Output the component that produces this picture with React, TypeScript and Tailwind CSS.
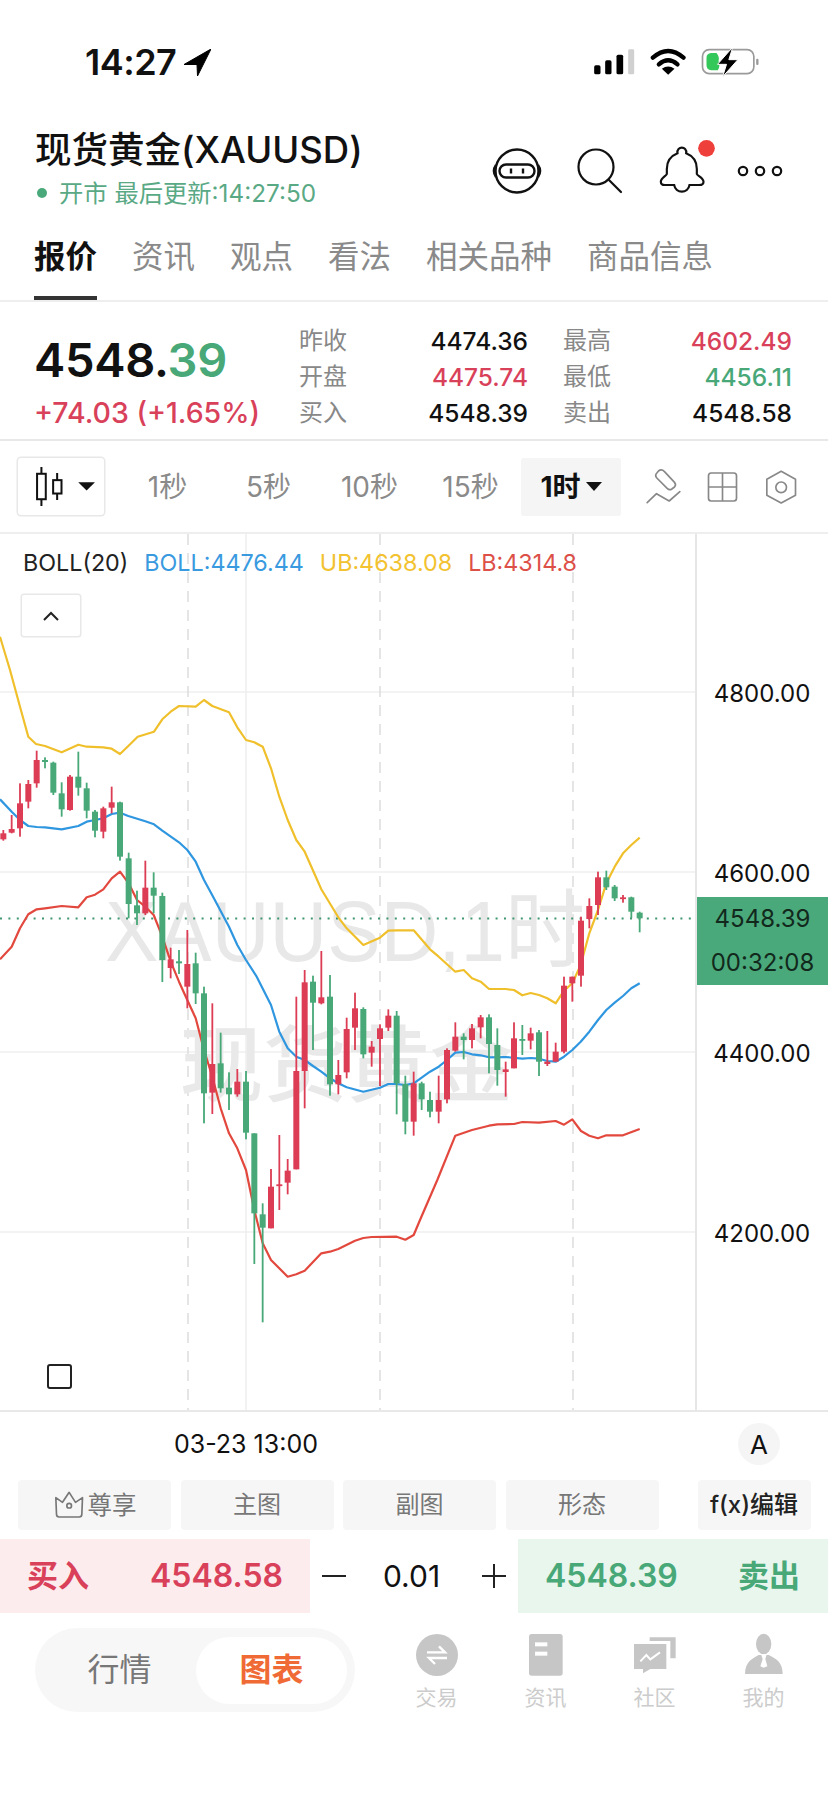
import React from "react";

const RED = "#dc3c54";
const GREEN = "#48a878";

type C = [number, number, number, number, number, "r" | "g"];

const z3: C[] = [
  [10, 630, 640, 658, 662, "r"], [35, 585, 627, 638, 640, "r"], [60, 490, 550, 625, 650, "r"], [85, 480, 492, 545, 565, "r"],
  [110, 392, 420, 490, 503, "r"], [135, 412, 420, 426, 445, "g"], [160, 425, 428, 518, 525, "g"], [185, 487, 520, 568, 590, "g"],
  [210, 465, 470, 570, 572, "r"], [235, 395, 470, 503, 527, "g"], [260, 488, 505, 572, 595, "g"], [285, 570, 575, 632, 652, "g"],
  [310, 560, 565, 635, 655, "r"], [335, 500, 547, 563, 580, "r"], [360, 545, 547, 710, 722, "g"], [386, 698, 715, 852, 895, "g"],
  [411, 812, 856, 880, 915, "g"], [436, 722, 803, 880, 885, "r"], [461, 757, 803, 827, 880, "g"], [487, 818, 828, 1020, 1086, "g"],
  [512, 983, 1018, 1044, 1075, "r"], [537, 990, 1024, 1030, 1062, "g"],
];

const z4: C[] = [
  [562, -90, 12, 80, 145, "r"], [587, -22, 10, 100, 132, "g"], [612, 80, 100, 400, 490, "g"], [637, 130, 312, 398, 462, "r"],
  [662, 218, 310, 385, 398, "g"], [687, 337, 383, 403, 450, "g"], [712, 327, 365, 403, 410, "r"], [738, 333, 365, 518, 538, "g"],
  [763, 520, 520, 760, 912, "g"], [788, 730, 763, 803, 1087, "g"], [813, 627, 680, 805, 805, "r"], [838, 525, 673, 678, 750, "r"],
  [863, 597, 632, 668, 703, "r"], [889, 110, 333, 628, 628, "r"], [914, 30, 67, 333, 445, "r"], [939, 47, 65, 128, 270, "g"],
  [964, -27, 112, 130, 133, "r"], [990, 45, 110, 373, 407, "g"], [1015, 300, 345, 373, 403, "r"], [1040, 173, 207, 337, 355, "r"],
  [1065, 98, 145, 203, 270, "r"], [1090, 142, 147, 283, 295, "g"], [1115, 243, 260, 278, 320, "r"], [1140, 193, 205, 237, 378, "r"],
  [1165, 148, 167, 203, 213, "r"], [1190, 153, 167, 370, 463, "g"], [1216, 347, 372, 485, 523, "g"], [1241, 335, 370, 485, 527, "r"],
];

const z5: C[] = [
  [65, 785, 790, 838, 870, "g"], [90, 815, 840, 875, 892, "g"], [116, 767, 840, 875, 910, "r"], [141, 685, 690, 838, 850, "r"],
  [166, 607, 650, 692, 695, "r"], [191, 640, 650, 660, 718, "g"], [216, 612, 625, 660, 685, "r"], [242, 585, 592, 622, 655, "r"],
  [267, 583, 592, 672, 760, "g"], [292, 625, 675, 750, 797, "g"], [317, 725, 748, 756, 830, "r"], [342, 607, 655, 745, 745, "r"],
  [367, 615, 657, 661, 705, "g"], [392, 623, 640, 662, 688, "r"], [417, 630, 637, 725, 768, "g"], [442, 633, 725, 732, 738, "r"],
  [467, 668, 695, 725, 725, "r"], [492, 470, 497, 695, 700, "r"], [517, 470, 470, 490, 545, "r"], [543, 290, 302, 467, 500, "r"],
  [568, 235, 258, 297, 325, "r"], [594, 155, 172, 255, 285, "r"], [619, 152, 172, 202, 210, "g"], [644, 195, 200, 235, 243, "g"],
  [669, 225, 232, 237, 248, "r"], [694, 230, 232, 275, 295, "g"], [719, 275, 278, 295, 337, "g"],
];

type P = [number, number];
const a3 = (p: P): P => [p[0] / 3, 620 + p[1] / 3];
const a4 = (p: P): P => [p[0] / 3, 960 + p[1] / 3];
const a5 = (p: P): P => [400 + p[0] / 3, 820 + p[1] / 3];
const pts = (l: P[]) => l.map((p) => `${p[0].toFixed(1)},${p[1].toFixed(1)}`).join(" ");

const candles = [
  ...z3.map((c) => ({ x: c[0] / 3, o: 620, c })),
  ...z4.map((c) => ({ x: c[0] / 3, o: 960, c })),
  ...z5.map((c) => ({ x: 400 + c[0] / 3, o: 820, c })),
];

const yellow: P[] = [
  ...([[0, 50], [30, 150], [60, 260], [85, 350], [108, 372], [135, 378], [185, 397], [235, 374], [260, 380], [310, 382], [335, 386], [360, 402], [385, 378], [413, 350], [462, 335], [487, 298], [512, 275], [537, 258], [587, 260], [612, 240], [637, 258], [687, 277], [712, 322], [738, 360], [763, 367], [788, 380], [813, 445], [838, 530], [863, 600], [889, 660], [914, 695], [964, 808], [1015, 892], [1040, 925], [1090, 975], [1140, 953], [1165, 932], [1190, 931]] as P[]).map(a3),
  ...([[41, 331], [90, 388], [116, 410], [166, 455], [191, 450], [216, 475], [242, 485], [267, 507], [317, 507], [342, 510], [367, 526], [392, 519], [417, 525], [442, 535], [467, 550], [492, 512], [517, 490], [542, 435], [568, 340], [594, 270], [619, 190], [644, 140], [669, 100], [694, 75], [719, 53]] as P[]).map(a5),
];

const blue: P[] = [
  ...([[0, 538], [35, 575], [60, 600], [85, 618], [110, 621], [135, 622], [185, 628], [235, 618], [260, 605], [285, 600], [310, 595], [335, 582], [360, 578], [385, 588], [436, 604], [462, 613], [487, 632], [537, 667], [562, 690], [587, 725], [612, 780], [638, 828], [687, 920], [712, 975], [738, 1020]] as P[]).map(a3),
  ...([[770, 50], [813, 135], [838, 215], [863, 265], [889, 290], [914, 300], [939, 318], [964, 335], [990, 355], [1015, 370], [1040, 382], [1090, 395], [1140, 383], [1165, 372], [1190, 372], [1216, 375]] as P[]).map(a4),
  ...([[41, 790], [90, 755], [116, 740], [141, 720], [166, 698], [191, 696], [216, 703], [242, 706], [267, 712], [317, 711], [367, 716], [392, 714], [417, 716], [442, 723], [467, 725], [492, 710], [517, 690], [542, 665], [568, 635], [594, 600], [619, 570], [644, 548], [669, 528], [694, 505], [719, 490]] as P[]).map(a5),
];

const redLine: P[] = [
  ...([[0, 1018], [35, 980], [60, 925], [85, 883], [110, 868], [135, 865], [185, 858], [235, 862], [260, 832], [285, 824], [310, 808], [335, 775], [360, 755], [386, 790], [411, 840], [436, 860], [461, 885], [487, 950]] as P[]).map(a3),
  ...([[512, 5], [537, 65], [562, 120], [587, 175], [612, 270], [637, 350], [662, 445], [687, 520], [712, 565], [738, 630], [763, 750], [788, 850], [813, 900], [863, 950], [889, 943], [914, 932], [964, 880], [990, 875], [1015, 867], [1065, 842], [1090, 834], [1115, 831], [1190, 830], [1216, 839], [1241, 825], [1260, 780]] as P[]).map(a4),
  ...([[112, 1080], [166, 947], [216, 930], [267, 917], [292, 913], [342, 912], [367, 906], [417, 908], [467, 903], [492, 914], [517, 898], [543, 933], [568, 947], [594, 955], [619, 946], [669, 946], [719, 927]] as P[]).map(a5),
];

function ChartDrawing() {
  return (
    <svg className="absolute left-0 top-0" width="828" height="876" viewBox="0 534 828 876">
      {[692, 872, 1052, 1232].map((y) => (
        <line key={y} x1="0" x2="696" y1={y} y2={y} stroke="#efefef" strokeWidth="1.5" />
      ))}
      <line x1="246" x2="246" y1="534" y2="1410" stroke="#eeeeee" strokeWidth="1.5" />
      <line x1="696" x2="696" y1="534" y2="1410" stroke="#e6e6e6" strokeWidth="2" />
      {[188, 380, 573].map((x) => (
        <line key={x} x1={x} x2={x} y1="534" y2="1410" stroke="#dddddd" strokeWidth="1.5" strokeDasharray="11 8" />
      ))}
      <text x="105" y="961" fontSize="86" textLength="480" lengthAdjust="spacingAndGlyphs" fill="#e8e8e8" fontFamily="'Liberation Sans','Noto Sans CJK SC',sans-serif">XAUUSD,1时</text>
      <text x="180" y="1095" fontSize="83" textLength="333" lengthAdjust="spacingAndGlyphs" fill="#e9e9e9" fontWeight="500" fontFamily="'Noto Sans CJK SC',sans-serif">现货黄金</text>
      <line x1="0" x2="696" y1="918.5" y2="918.5" stroke="#3f9670" strokeWidth="2" strokeDasharray="2 6.400" />
      <polyline points={pts(yellow)} fill="none" stroke="#f0c02c" strokeWidth="2.2" strokeLinejoin="round" />
      <polyline points={pts(blue)} fill="none" stroke="#2f96e0" strokeWidth="2.2" strokeLinejoin="round" />
      <polyline points={pts(redLine)} fill="none" stroke="#e2483d" strokeWidth="2.2" strokeLinejoin="round" />
      {candles.map(({ x, o, c }, i) => {
        const col = c[5] === "r" ? RED : GREEN;
        return (
          <g key={i} fill={col}>
            <rect x={x - 0.9} y={o + c[1] / 3} width="1.8" height={(c[4] - c[1]) / 3} />
            <rect x={x - 3} y={o + c[2] / 3} width="6" height={Math.max((c[3] - c[2]) / 3, 1.8)} />
          </g>
        );
      })}
    </svg>
  );
}

function StatusIcons() {
  return (
    <svg width="167" height="30" viewBox="100 50 500 90">
      <rect x="103" y="105" width="19" height="27" rx="5" fill="#000" />
      <rect x="136" y="90" width="19" height="42" rx="5" fill="#000" />
      <rect x="170" y="73" width="20" height="59" rx="5" fill="#000" />
      <rect x="205" y="57" width="18" height="75" rx="4" fill="#d0d0d0" />
      <path d="M279 82 Q325 42 371 82" fill="none" stroke="#000" strokeWidth="13" strokeLinecap="round" />
      <path d="M297 102 Q325 78 353 102" fill="none" stroke="#000" strokeWidth="13" strokeLinecap="round" />
      <path d="M325 133 L306 115 Q325 102 344 115 Z" fill="#000" />
      <rect x="428" y="58" width="154" height="72" rx="20" fill="none" stroke="#9a9a9a" strokeWidth="5" />
      <rect x="589" y="85" width="7" height="19" rx="3" fill="#9a9a9a" />
      <path d="M454 68 L470 68 Q480 80 476 92 Q482 106 474 120 L454 120 Q440 118 440 104 L440 82 Q440 70 454 68 Z" fill="#34c759" />
      <path d="M519 50 L473 102 L500 102 L488 140 L534 88 L507 88 Z" fill="#000" stroke="#fff" strokeWidth="3" />
    </svg>
  );
}

function Robot() {
  return (
    <svg width="52" height="48" viewBox="0 0 52 48" fill="none" stroke="#111" strokeWidth="2.400">
      <circle cx="26" cy="24" r="21.500" />
      <path d="M5 18 Q0.800 24 5 30 M47 18 Q51.200 24 47 30" />
      <rect x="8.500" y="17.500" width="35" height="13" rx="6.500" />
      <path d="M20 21.500 V26.500 M32 21.500 V26.500" />
    </svg>
  );
}

function Search() {
  return (
    <svg width="46" height="46" viewBox="0 0 46 46" fill="none" stroke="#111" strokeWidth="2.200" strokeLinecap="round">
      <circle cx="19" cy="19" r="17.500" />
      <path d="M32 32 L44 44" />
    </svg>
  );
}

function Bell() {
  return (
    <svg width="57" height="55" viewBox="535 15 170 165" fill="none">
      <path
        d="M590 58 C588 46 596 41 603 41 C610 41 618 46 616 58 C636 66 648 84 648 105 L648 120 C650 126 668 132 668 143 C668 150 662 153 655 153 L626 153 C624 165 614 173 603 173 C592 173 582 165 580 153 L552 153 C545 153 540 150 540 143 C540 132 556 126 558 120 L558 105 C558 84 570 66 590 58 Z"
        stroke="#111"
        strokeWidth="6.500"
      />
      <circle cx="677" cy="43" r="25" fill="#ee3f3a" />
    </svg>
  );
}

function Dots() {
  return (
    <svg width="46" height="12" viewBox="0 0 46 12" fill="none" stroke="#111" strokeWidth="2.200">
      <circle cx="6" cy="6" r="4.200" />
      <circle cx="23" cy="6" r="4.200" />
      <circle cx="40" cy="6" r="4.200" />
    </svg>
  );
}

function CandleIcon() {
  return (
    <svg width="86" height="57" viewBox="55 25 257 170" fill="none">
      <path d="M125 52 V168 M172 70 V150" stroke="#111" strokeWidth="6" />
      <rect x="112" y="72" width="26" height="76" fill="#fff" stroke="#111" strokeWidth="6" />
      <rect x="160" y="91" width="25" height="40" fill="#fff" stroke="#111" strokeWidth="6" />
      <path d="M235 97 H285 L260 122 Z" fill="#111" />
    </svg>
  );
}

function ToolIcons() {
  return (
    <svg width="157" height="40" viewBox="400 50 470 120" fill="none" stroke="#888" strokeWidth="5" strokeLinejoin="round">
      <path d="M446 62 Q455 55 464 64 L494 96 Q500 103 494 110 L486 116 Q479 121 472 114 L441 83 Q434 75 441 68 Z" />
      <path d="M412 157 L440 130 L478 152 L510 124" strokeLinecap="round" />
      <rect x="596" y="68" width="84" height="84" rx="8" />
      <path d="M638 68 V152 M596 110 H680" />
      <path d="M814 63 L857 87 V135 L814 158 L771 135 V87 Z" />
      <circle cx="814" cy="111" r="16" />
    </svg>
  );
}

function Crown() {
  return (
    <svg width="32" height="30" viewBox="130 45 95 90" fill="none" stroke="#777" strokeWidth="5" strokeLinejoin="round">
      <path d="M138 68 L140 118 Q140 126 148 126 L208 126 Q216 126 216 118 L218 68 L197 82 L178 52 L158 82 Z" />
      <circle cx="178" cy="92" r="7" />
    </svg>
  );
}

const NG = "#c6c6c6";

function NavTrade() {
  return (
    <svg width="44" height="44" viewBox="44 22 132 132">
      <circle cx="110" cy="88" r="63" fill={NG} />
      <path d="M80 80 H134 L116 62 M140 97 H86 L104 115" fill="none" stroke="#fff" strokeWidth="7" />
    </svg>
  );
}

function NavDoc() {
  return (
    <svg width="44" height="44" viewBox="372 22 132 132">
      <rect x="387" y="25" width="101" height="125" rx="8" fill={NG} />
      <rect x="405" y="50" width="37" height="12" fill="#fff" />
      <rect x="405" y="78" width="37" height="12" fill="#fff" />
    </svg>
  );
}

function NavCommunity() {
  return (
    <svg width="44" height="44" viewBox="700 22 132 132">
      <path d="M750 35 H828 V98 H812 V46 H750 Z" fill={NG} />
      <path d="M703 55 H800 V130 H752 L730 143 V130 H703 Z" fill={NG} />
      <path d="M722 107 L740 88 L752 101 L781 80" fill="none" stroke="#fff" strokeWidth="6" />
    </svg>
  );
}

function NavMe() {
  return (
    <svg width="44" height="44" viewBox="1028 22 132 132">
      <ellipse cx="1093" cy="55" rx="23" ry="31" fill={NG} />
      <path d="M1037 145 C1037 108 1060 98 1078 88 L1108 88 C1128 98 1150 108 1150 145 Z" fill={NG} />
      <path d="M1085 86 H1102 L1098 100 L1104 122 L1093 126 L1083 122 L1090 100 Z" fill="#fff" />
    </svg>
  );
}

function QuoteRow({ a, av, ac, b, bv, bc }: { a: string; av: string; ac: string; b: string; bv: string; bc: string }) {
  return (
    <div className="flex h-[36px] items-center leading-[36px]">
      <span className="w-[60px] text-[24px] text-[#888888]">{a}</span>
      <span className={`w-[169px] text-right text-[24.500px] font-medium ${ac}`}>{av}</span>
      <span className="ml-[35px] w-[60px] text-[24px] text-[#888888]">{b}</span>
      <span className={`w-[169px] text-right text-[24.500px] font-medium ${bc}`}>{bv}</span>
    </div>
  );
}

export default function App() {
  return (
    <div className="flex h-[1796px] w-[828px] flex-col overflow-hidden bg-white font-['Inter','Noto_Sans_CJK_SC',sans-serif] text-[#111111]">
      {/* status bar */}
      <div className="flex h-[124px] shrink-0 items-center justify-between pl-[85px] pr-[68px]">
        <div className="flex items-center gap-[8px]">
          <span className="text-[36px] font-semibold leading-none tracking-[-0.5px]">14:27</span>
          <svg width="27" height="27" viewBox="0 0 27 27">
            <path d="M27 0 L0 15.500 L13 15.500 L13.500 27 Z" fill="#000" stroke="#000" strokeWidth="1" strokeLinejoin="round" />
          </svg>
        </div>
        <StatusIcons />
      </div>

      {/* header */}
      <div className="flex h-[88px] shrink-0 items-center justify-between pl-[35px] pr-[45px]">
        <div>
          <div className="pt-[1px] text-[36.500px] font-medium leading-[50px]">现货黄金(XAUUSD)</div>
          <div className="mt-[-1px] flex h-[38px] items-center text-[24.300px] text-[#5aa985]">
            <span className="ml-[2px] mr-[12px] h-[10px] w-[10px] rounded-full bg-[#4aa97a]" />
            <span>开市 最后更新:14:27:50</span>
          </div>
        </div>
        <div className="mt-[5px] flex items-center">
          <Robot />
          <div className="ml-[34px]"><Search /></div>
          <div className="ml-[36px] mt-[-8px]"><Bell /></div>
          <div className="ml-[21px]"><Dots /></div>
        </div>
      </div>

      {/* tabs */}
      <div className="flex h-[90px] shrink-0 items-stretch gap-[35px] border-b-2 border-[#eeeeee] pl-[34px] text-[31.500px] text-[#8a8a8a]">
        <div className="relative flex items-center pt-[2px] font-semibold text-[#111111]">
          报价
          <span className="absolute bottom-0 left-0 h-[4px] w-full bg-[#333333]" />
        </div>
        {["资讯", "观点", "看法", "相关品种", "商品信息"].map((t) => (
          <div key={t} className="flex items-center pt-[2px]">{t}</div>
        ))}
      </div>

      {/* quote */}
      <div className="flex h-[139px] shrink-0 border-b-2 border-[#e8e8e8] pl-[34px]">
        <div className="w-[265px] pt-[29px]">
          <div className="text-[47px] font-semibold leading-[58px] tracking-[-0.3px]">
            4548.<span className="text-[#48a878]">39</span>
          </div>
          <div className="mt-[6px] whitespace-nowrap text-[28.500px] font-medium leading-[36px] text-[#d9415a]">+74.03 (+1.65%)</div>
        </div>
        <div className="pt-[21px]">
          <QuoteRow a="昨收" av="4474.36" ac="text-[#111111]" b="最高" bv="4602.49" bc="text-[#d9415a]" />
          <QuoteRow a="开盘" av="4475.74" ac="text-[#d9415a]" b="最低" bv="4456.11" bc="text-[#48a878]" />
          <QuoteRow a="买入" av="4548.39" ac="text-[#111111]" b="卖出" bv="4548.58" bc="text-[#111111]" />
        </div>
      </div>

      {/* toolbar */}
      <div className="flex h-[93px] shrink-0 items-center border-b-2 border-[#eeeeee] pl-[18px]">
        <div className="h-[57px] w-[86px] rounded-[3px] shadow-[0_0_0_1.5px_#e8e8e8]">
          <CandleIcon />
        </div>
        <div className="ml-[13px] flex text-[28px] text-[#8a8a8a]">
          {["1秒", "5秒", "10秒", "15秒"].map((t) => (
            <div key={t} className="w-[101px] text-center">{t}</div>
          ))}
        </div>
        <div className="flex h-[58px] w-[100px] items-center justify-center gap-[5px] rounded-[3px] bg-[#f5f5f5] text-[28px] font-bold">
          <span>1时</span>
          <svg width="16" height="9" viewBox="0 0 16 9"><path d="M0 0 H16 L8 9 Z" fill="#111" /></svg>
        </div>
        <div className="ml-[22px]"><ToolIcons /></div>
      </div>

      {/* chart */}
      <div className="relative h-[878px] shrink-0 border-b-2 border-[#e8e8e8]">
        <ChartDrawing />
        <div className="relative flex gap-[16px] whitespace-nowrap pl-[23px] pt-[14px] text-[23.300px] leading-[30px]">
          <span className="text-[#222222]">BOLL(20)</span>
          <span className="text-[#3a9ae0]">BOLL:4476.44</span>
          <span className="text-[#f2c230]">UB:4638.08</span>
          <span className="text-[#dd5048]">LB:4314.8</span>
        </div>
        <div className="relative ml-[22px] mt-[17px] flex h-[41px] w-[58px] items-center justify-center rounded-[2px] bg-white shadow-[0_0_0_1.5px_#e8e8e8]">
          <svg width="18" height="10" viewBox="0 0 18 10" fill="none" stroke="#222" strokeWidth="2"><path d="M2 9 L9 2 L16 9" /></svg>
        </div>
        {[["4800.00", "top-[142px]"], ["4600.00", "top-[322px]"], ["4400.00", "top-[502px]"], ["4200.00", "top-[682px]"]].map(([t, c]) => (
          <div key={t} className={`absolute left-[696px] w-[132px] text-center text-[24px] leading-[36px] ${c}`}>{t}</div>
        ))}
        <div className="absolute left-[697px] top-[363px] h-[88px] w-[131px] bg-[#4aa97a] text-center text-[24px] leading-[44px] text-[#12281c]">
          <div>4548.39</div>
          <div>00:32:08</div>
        </div>
        <div className="absolute left-[47px] top-[830px] h-[25px] w-[25px] rounded-[3px] border-2 border-[#222222]" />
      </div>

      {/* x axis */}
      <div className="flex h-[64px] shrink-0 items-center justify-between pl-[174px] pr-[48px]">
        <span className="text-[25px] leading-none">03-23 13:00</span>
        <div className="flex h-[42px] w-[42px] items-center justify-center rounded-full bg-[#f5f5f5] text-[26px]">A</div>
      </div>

      {/* indicator buttons */}
      <div className="mt-[4px] flex h-[50px] shrink-0 pl-[18px] text-[24px] text-[#777777]">
        <div className="flex gap-[9.500px]">
          <div className="flex w-[153px] items-center justify-center gap-[3px] rounded-[4px] bg-[#f6f6f6] text-[24.500px]">
            <Crown />
            <span>尊享</span>
          </div>
          {["主图", "副图", "形态"].map((t) => (
            <div key={t} className="flex w-[153px] items-center justify-center rounded-[4px] bg-[#f6f6f6]">{t}</div>
          ))}
        </div>
        <div className="ml-[39px] flex w-[113px] items-center justify-center rounded-[4px] bg-[#f6f6f6] font-medium text-[#222222]">f(x)编辑</div>
      </div>

      {/* trade */}
      <div className="mt-[9px] flex h-[74px] shrink-0">
        <div className="flex w-[310px] items-center justify-between bg-[#fdeced] pl-[27px] pr-[27px] text-[#d9415a]">
          <span className="text-[31px] font-bold">买入</span>
          <span className="text-[32px] font-semibold">4548.58</span>
        </div>
        <div className="flex w-[208px] items-center justify-between px-[12px] text-[#111111]">
          <span className="h-[2px] w-[24px] bg-[#222222]" />
          <span className="mr-[5px] text-[30px]">0.01</span>
          <span className="relative h-[24px] w-[24px]">
            <span className="absolute left-0 top-[11px] h-[2px] w-[24px] bg-[#222222]" />
            <span className="absolute left-[11px] top-0 h-[24px] w-[2px] bg-[#222222]" />
          </span>
        </div>
        <div className="flex w-[310px] items-center justify-between bg-[#e9f6ee] pl-[27px] pr-[28px] text-[#48a878]">
          <span className="text-[32px] font-semibold">4548.39</span>
          <span className="text-[31px] font-bold">卖出</span>
        </div>
      </div>

      {/* bottom nav */}
      <div className="mt-[15px] flex shrink-0 pl-[35px]">
        <div className="flex h-[84px] w-[320px] items-center rounded-full bg-[#f7f7f7] p-[8px] text-[32px]">
          <div className="flex-1 text-center text-[#777777]">行情</div>
          <div className="flex h-[67px] w-[151px] items-center justify-center rounded-full bg-white font-bold text-[#f06a35]">图表</div>
        </div>
        <div className="ml-[27px] grid w-[436px] grid-cols-4 pt-[5px] text-[21px] leading-[30px] text-[#cccccc]">
          {[
            ["交易", <NavTrade key="a" />],
            ["资讯", <NavDoc key="b" />],
            ["社区", <NavCommunity key="c" />],
            ["我的", <NavMe key="d" />],
          ].map(([t, icon]) => (
            <div key={t as string} className="flex flex-col items-center">
              {icon}
              <span className="mt-[6px]">{t}</span>
            </div>
          ))}
        </div>
      </div>
    </div>
  );
}
